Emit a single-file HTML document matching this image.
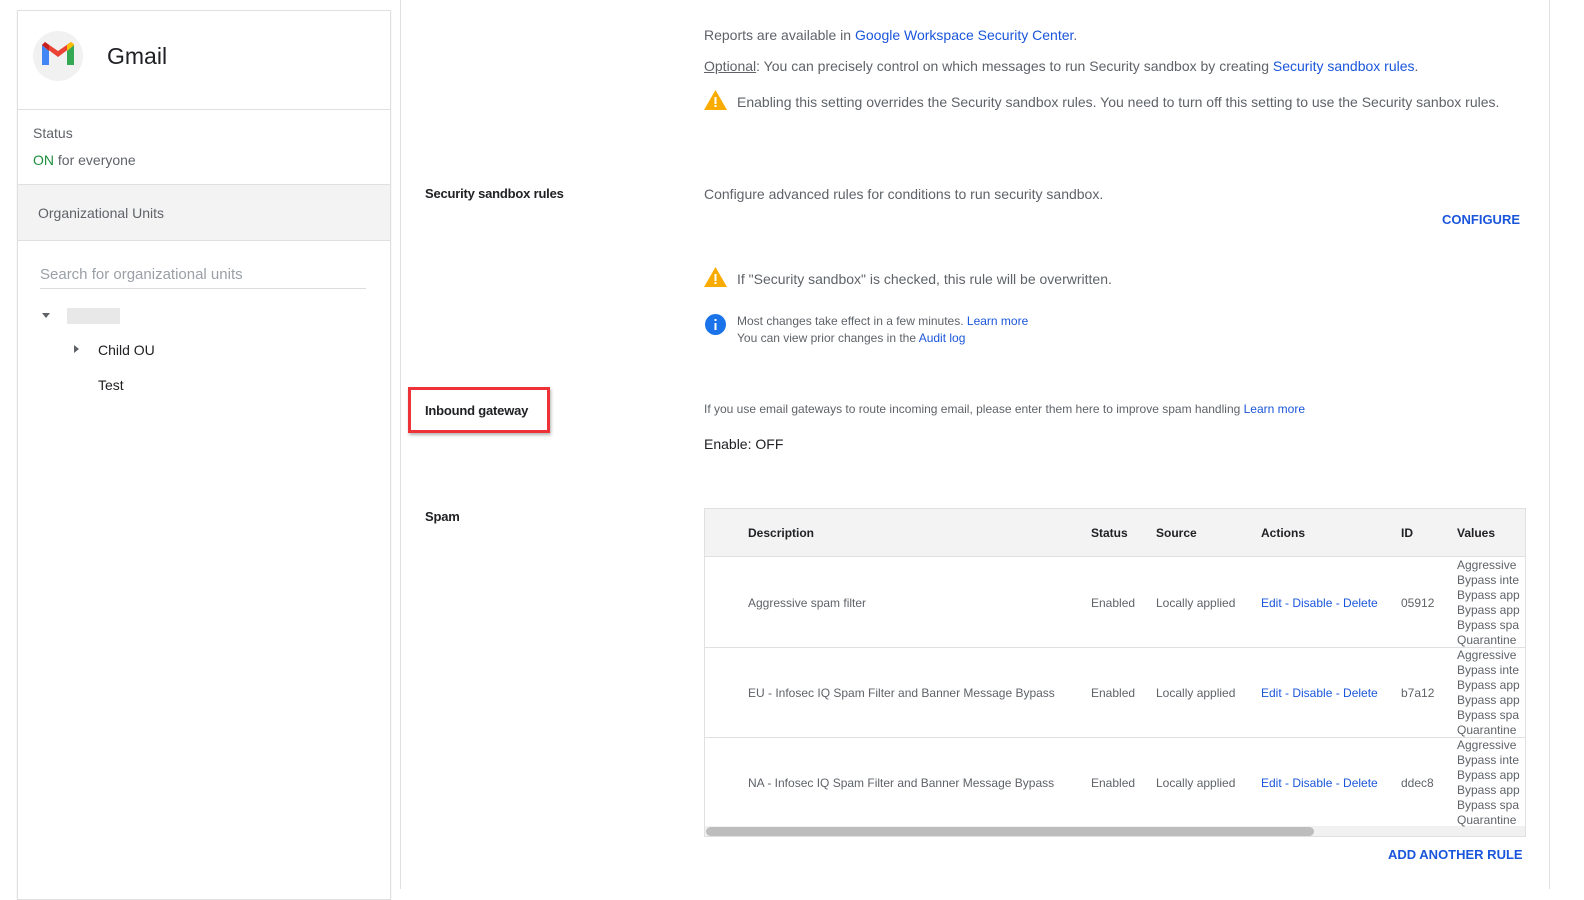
<!DOCTYPE html>
<html><head><meta charset="utf-8"><style>
*{margin:0;padding:0;box-sizing:border-box}
body{width:1584px;height:889px;background:#fff;font-family:"Liberation Sans",sans-serif;color:#5f6368;position:relative;overflow:hidden}
.a{position:absolute;white-space:nowrap}
a,.l{color:#1a56db;text-decoration:none}
.lbl{font-size:13px;color:#202124;font-weight:bold;letter-spacing:-0.2px}
.t{font-size:14px}
.s{font-size:12px}
</style></head><body>
<div class="a" style="left:17px;top:10px;width:374px;height:890px;border:1px solid #e0e0e0;box-shadow:0 1px 2px rgba(0,0,0,.08)"></div>
<div class="a" style="left:33px;top:31px;width:50px;height:50px;border-radius:50%;background:#f1f1f1"></div>
<svg class="a" style="left:42px;top:41px" width="32" height="25" viewBox="0 0 32 25">
<path d="M0 4v20h7V10z" fill="#4285f4"/>
<path d="M25 10v14h7V4z" fill="#34a853"/>
<path d="M0 4l16 12L32 4 29 1 16 10 3 1z" fill="#ea4335"/>
<path d="M25 4v6l7-6 0-1-3-2z" fill="#fbbc04"/>
<path d="M0 4v0l7 6V4L3 1z" fill="#c5221f"/>
</svg>
<div class="a" style="left:107px;top:43px;font-size:23px;color:#202124">Gmail</div>
<div class="a" style="left:18px;top:109px;width:372px;border-top:1px solid #e0e0e0"></div>
<div class="a t" style="left:33px;top:125px">Status</div>
<div class="a t" style="left:33px;top:152px"><span style="color:#1e8e3e">ON</span> for everyone</div>
<div class="a" style="left:18px;top:184px;width:372px;height:57px;background:#f3f3f3;border-top:1px solid #e0e0e0;border-bottom:1px solid #e0e0e0"></div>
<div class="a t" style="left:38px;top:205px">Organizational Units</div>
<div class="a" style="left:40px;top:266px;font-size:15px;color:#9aa0a6">Search for organizational units</div>
<div class="a" style="left:40px;top:288px;width:326px;border-top:1px solid #dadce0"></div>
<div class="a" style="left:42px;top:313px;border:4px solid transparent;border-top:5px solid #5f6368"></div>
<div class="a" style="left:67px;top:308px;width:53px;height:16px;background:#e8e8e8"></div>
<div class="a" style="left:74px;top:345px;border:4px solid transparent;border-left:5px solid #5f6368;border-right:none"></div>
<div class="a t" style="left:98px;top:342px;color:#202124">Child OU</div>
<div class="a t" style="left:98px;top:377px;color:#202124">Test</div>
<div class="a" style="left:400px;top:0;height:889px;border-left:1px solid #e0e0e0"></div>
<div class="a" style="left:1549px;top:0;height:889px;border-left:1px solid #e0e0e0"></div>
<div class="a t" style="left:704px;top:27px">Reports are available in <span class="l">Google Workspace Security Center</span>.</div>
<div class="a t" style="left:704px;top:58px"><u>Optional</u>: You can precisely control on which messages to run Security sandbox by creating <span class="l">Security sandbox rules</span>.</div>
<svg class="a" style="left:704px;top:90px" width="23" height="20" viewBox="0 0 23 20"><path d="M11.5 0L23 20H0z" fill="#f9ab00"/><rect x="10.5" y="7" width="2" height="7" fill="#fff"/><rect x="10.5" y="15" width="2" height="2" fill="#fff"/></svg>
<div class="a t" style="left:737px;top:94px">Enabling this setting overrides the Security sandbox rules. You need to turn off this setting to use the Security sanbox rules.</div>
<div class="a lbl" style="left:425px;top:186px">Security sandbox rules</div>
<div class="a t" style="left:704px;top:186px">Configure advanced rules for conditions to run security sandbox.</div>
<div class="a" style="left:1442px;top:212px;font-size:13px;font-weight:bold;color:#1a56db">CONFIGURE</div>
<svg class="a" style="left:704px;top:267px" width="23" height="20" viewBox="0 0 23 20"><path d="M11.5 0L23 20H0z" fill="#f9ab00"/><rect x="10.5" y="7" width="2" height="7" fill="#fff"/><rect x="10.5" y="15" width="2" height="2" fill="#fff"/></svg>
<div class="a t" style="left:737px;top:271px">If "Security sandbox" is checked, this rule will be overwritten.</div>
<svg class="a" style="left:705px;top:314px" width="21" height="21" viewBox="0 0 21 21"><circle cx="10.5" cy="10.5" r="10.5" fill="#1a73e8"/><rect x="9.5" y="9" width="2" height="7" fill="#fff"/><rect x="9.5" y="5" width="2" height="2" fill="#fff"/></svg>
<div class="a s" style="left:737px;top:314px">Most changes take effect in a few minutes. <span class="l">Learn more</span></div>
<div class="a s" style="left:737px;top:331px">You can view prior changes in the <span class="l">Audit log</span></div>
<div class="a" style="left:408px;top:387px;width:142px;height:46px;border:3px solid #ee3338;box-shadow:1px 2px 3px rgba(0,0,0,.3)"></div>
<div class="a lbl" style="left:425px;top:403px">Inbound gateway</div>
<div class="a s" style="left:704px;top:402px">If you use email gateways to route incoming email, please enter them here to improve spam handling <span class="l">Learn more</span></div>
<div class="a" style="left:704px;top:436px;font-size:14px;color:#202124">Enable: OFF</div>
<div class="a lbl" style="left:425px;top:509px">Spam</div>
<div class="a" style="left:704px;top:508px;width:822px;height:329px;border:1px solid #e0e0e0;overflow:hidden">
<div class="a" style="left:0;top:0;width:822px;height:48px;background:#f3f3f3;border-bottom:1px solid #e0e0e0"></div>
<div class="a" style="left:0;top:138px;width:822px;border-top:1px solid #e0e0e0"></div>
<div class="a" style="left:0;top:228px;width:822px;border-top:1px solid #e0e0e0"></div>
<div class="a" style="left:0;top:317px;width:822px;height:11px;background:#f1f1f1"></div>
<div class="a" style="left:1px;top:318px;width:608px;height:9px;border-radius:5px;background:#bdbdbd"></div>
<div style="color:#202124;font-weight:bold;font-size:12px">
<div class="a" style="left:43px;top:17px">Description</div><div class="a" style="left:386px;top:17px">Status</div><div class="a" style="left:451px;top:17px">Source</div><div class="a" style="left:556px;top:17px">Actions</div><div class="a" style="left:696px;top:17px">ID</div><div class="a" style="left:752px;top:17px">Values</div></div>
<div style="font-size:12px">
<div class="a" style="left:43px;top:87px">Aggressive spam filter</div>
<div class="a" style="left:43px;top:177px">EU - Infosec IQ Spam Filter and Banner Message Bypass</div>
<div class="a" style="left:43px;top:267px">NA - Infosec IQ Spam Filter and Banner Message Bypass</div>
<div class="a" style="left:386px;top:87px">Enabled</div><div class="a" style="left:386px;top:177px">Enabled</div><div class="a" style="left:386px;top:267px">Enabled</div>
<div class="a" style="left:451px;top:87px">Locally applied</div><div class="a" style="left:451px;top:177px">Locally applied</div><div class="a" style="left:451px;top:267px">Locally applied</div>
<div class="a l" style="left:556px;top:87px">Edit - Disable - Delete</div><div class="a l" style="left:556px;top:177px">Edit - Disable - Delete</div><div class="a l" style="left:556px;top:267px">Edit - Disable - Delete</div>
<div class="a" style="left:696px;top:87px">05912</div><div class="a" style="left:696px;top:177px">b7a12</div><div class="a" style="left:696px;top:267px">ddec8</div>
<div class="a" style="left:752px;top:49px;line-height:15px">Aggressive<br>Bypass inte<br>Bypass app<br>Bypass app<br>Bypass spa<br>Quarantine<br>Aggressive<br>Bypass inte<br>Bypass app<br>Bypass app<br>Bypass spa<br>Quarantine<br>Aggressive<br>Bypass inte<br>Bypass app<br>Bypass app<br>Bypass spa<br>Quarantine</div>
</div>
</div>
<div class="a" style="left:1388px;top:847px;font-size:13px;font-weight:bold;color:#1a56db">ADD ANOTHER RULE</div>
</body></html>
